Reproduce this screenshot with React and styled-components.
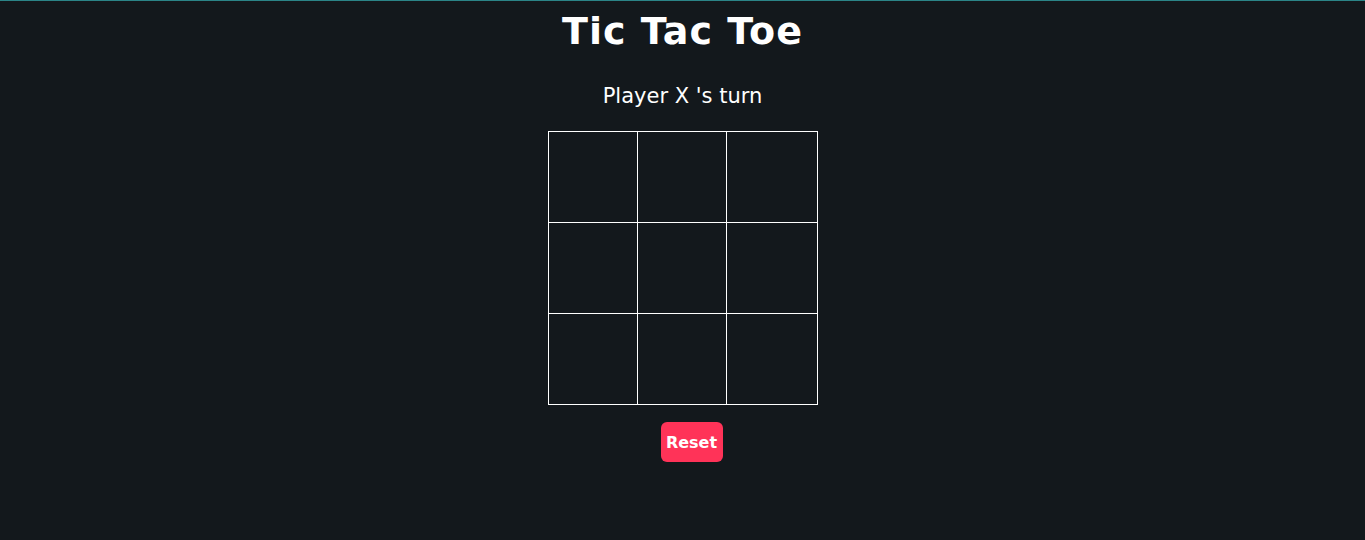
import React, { useState } from 'react';
import styled, { createGlobalStyle } from 'styled-components';

const GlobalStyle = createGlobalStyle`
  html, body {
    margin: 0;
    padding: 0;
    background: #13181c;
  }
  body {
    border-top: 1px solid #2b8487;
    font-family: "Comic Sans MS", "DejaVu Sans", sans-serif;
    color: #ffffff;
    min-height: 539px;
  }
`;

const Page = styled.div`
  display: flex;
  flex-direction: column;
  align-items: center;
`;

const Title = styled.h1`
  margin: 4px 0 0;
  font-size: 38px;
  font-weight: 700;
  line-height: 52px;
  letter-spacing: 1px;
`;

const Status = styled.p`
  margin: 26px 0 0;
  font-size: 21px;
  line-height: 26px;
`;

const Board = styled.div`
  display: grid;
  grid-template-columns: 89px 89px 91px;
  grid-template-rows: repeat(3, 91px);
  margin-top: 22px;
  border-top: 1px solid #ffffff;
  border-left: 1px solid #ffffff;
`;

const Cell = styled.button`
  border: none;
  border-right: 1px solid #ffffff;
  border-bottom: 1px solid #ffffff;
  background: transparent;
  color: #ffffff;
  font-family: inherit;
  font-size: 48px;
  font-weight: 700;
  padding: 0;
  cursor: pointer;
`;

const ResetButton = styled.button`
  margin: 17px 0 0 18px;
  width: 62px;
  height: 40px;
  border: none;
  border-radius: 6px;
  background: #ff3358;
  color: #ffffff;
  font-family: inherit;
  font-size: 16px;
  font-weight: 700;
  padding: 0;
  cursor: pointer;
`;

export default function App() {
  const [cells, setCells] = useState(Array(9).fill(''));
  const [player, setPlayer] = useState('X');

  const play = (i) => {
    if (cells[i]) return;
    const next = cells.slice();
    next[i] = player;
    setCells(next);
    setPlayer(player === 'X' ? 'O' : 'X');
  };

  const reset = () => {
    setCells(Array(9).fill(''));
    setPlayer('X');
  };

  return (
    <Page>
      <GlobalStyle />
      <Title>Tic Tac Toe</Title>
      <Status>Player {player} 's turn</Status>
      <Board>
        {cells.map((c, i) => (
          <Cell key={i} onClick={() => play(i)}>
            {c}
          </Cell>
        ))}
      </Board>
      <ResetButton onClick={reset}>Reset</ResetButton>
    </Page>
  );
}
